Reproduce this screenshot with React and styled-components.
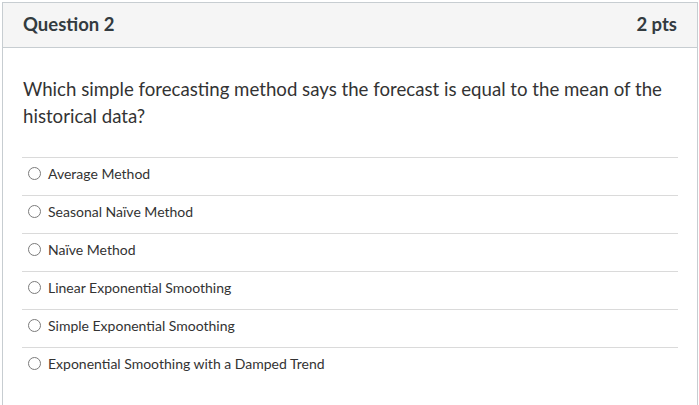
import React from 'react';
import styled, { createGlobalStyle } from 'styled-components';

const GlobalStyle = createGlobalStyle`
  html, body {
    margin: 0;
    padding: 0;
    background: #ffffff;
  }
  body {
    font-family: Lato, "Open Sans", "Liberation Sans", sans-serif;
    color: #2d3b45;
  }
`;

const Page = styled.div`
  padding: 2px 1px 0 2px;
`;

const Card = styled.div`
  border: 1px solid #c7cdd1;
  border-bottom: none;
  height: 403px;
  box-sizing: border-box;
`;

const Header = styled.div`
  display: flex;
  align-items: center;
  justify-content: space-between;
  padding: 0 20px 3px 20px;
  box-sizing: border-box;
  height: 45px;
  background: #f5f5f5;
  border-bottom: 1px solid #c7cdd1;
  font-size: 18.5px;
  font-weight: 700;
  color: #333b40;
`;

const Body = styled.div`
  padding: 28px 19px 0 19px;
`;

const QuestionText = styled.p`
  margin: 0 0 27px 1px;
  font-size: 18.65px;
  line-height: 27px;
  color: #333;
`;

const AnswerList = styled.div`
  display: flex;
  flex-direction: column;
`;

const Answer = styled.label`
  display: flex;
  align-items: center;
  gap: 7px;
  padding: 0 0 6px 6px;
  height: 31px;
  border-top: 1px solid #dadada;
  font-size: 14px;
  color: #333;
`;

const Radio = styled.span`
  width: 11px;
  height: 11px;
  border: 1px solid #7b7b7b;
  border-radius: 50%;
  flex: none;
`;

const answers = [
  'Average Method',
  'Seasonal Naïve Method',
  'Naïve Method',
  'Linear Exponential Smoothing',
  'Simple Exponential Smoothing',
  'Exponential Smoothing with a Damped Trend',
];

const App = () => (
  <Page>
    <GlobalStyle />
    <Card>
      <Header>
        <span>Question 2</span>
        <span>2 pts</span>
      </Header>
      <Body>
        <QuestionText>
          Which simple forecasting method says the forecast is equal to the mean of the historical data?
        </QuestionText>
        <AnswerList>
          {answers.map((a) => (
            <Answer key={a}>
              <Radio />
              {a}
            </Answer>
          ))}
        </AnswerList>
      </Body>
    </Card>
  </Page>
);

export default App;
